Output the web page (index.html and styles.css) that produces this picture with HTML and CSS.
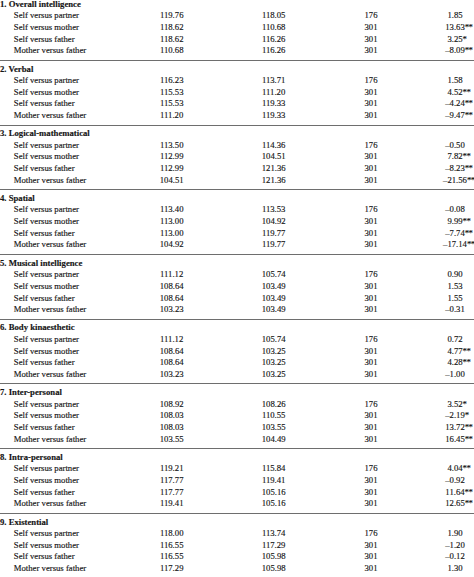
FILE: index.html
```html
<!DOCTYPE html>
<html lang="en">
<head>
<meta charset="utf-8">
<title>Intelligence comparisons</title>
<link rel="stylesheet" href="styles.css">
</head>
<body>
<div class="table">
  <div class="section">
    <div class="head">1. Overall intelligence</div>
    <div class="row"><span class="lab">Self versus partner</span><span class="num">119.76</span><span class="num">118.05</span><span class="num">176</span><span class="num">1.85</span></div>
    <div class="row"><span class="lab">Self versus mother</span><span class="num">118.62</span><span class="num">110.68</span><span class="num">301</span><span class="num">13.63<span class="sig">**</span></span></div>
    <div class="row"><span class="lab">Self versus father</span><span class="num">118.62</span><span class="num">116.26</span><span class="num">301</span><span class="num">3.25<span class="sig">*</span></span></div>
    <div class="row"><span class="lab">Mother versus father</span><span class="num">110.68</span><span class="num">116.26</span><span class="num">301</span><span class="num">–8.09<span class="sig">**</span></span></div>
  </div>
  <div class="section">
    <div class="head">2. Verbal</div>
    <div class="row"><span class="lab">Self versus partner</span><span class="num">116.23</span><span class="num">113.71</span><span class="num">176</span><span class="num">1.58</span></div>
    <div class="row"><span class="lab">Self versus mother</span><span class="num">115.53</span><span class="num">111.20</span><span class="num">301</span><span class="num">4.52<span class="sig">**</span></span></div>
    <div class="row"><span class="lab">Self versus father</span><span class="num">115.53</span><span class="num">119.33</span><span class="num">301</span><span class="num">–4.24<span class="sig">**</span></span></div>
    <div class="row"><span class="lab">Mother versus father</span><span class="num">111.20</span><span class="num">119.33</span><span class="num">301</span><span class="num">–9.47<span class="sig">**</span></span></div>
  </div>
  <div class="section">
    <div class="head">3. Logical-mathematical</div>
    <div class="row"><span class="lab">Self versus partner</span><span class="num">113.50</span><span class="num">114.36</span><span class="num">176</span><span class="num">–0.50</span></div>
    <div class="row"><span class="lab">Self versus mother</span><span class="num">112.99</span><span class="num">104.51</span><span class="num">301</span><span class="num">7.82<span class="sig">**</span></span></div>
    <div class="row"><span class="lab">Self versus father</span><span class="num">112.99</span><span class="num">121.36</span><span class="num">301</span><span class="num">–8.23<span class="sig">**</span></span></div>
    <div class="row"><span class="lab">Mother versus father</span><span class="num">104.51</span><span class="num">121.36</span><span class="num">301</span><span class="num">–21.56<span class="sig">**</span></span></div>
  </div>
  <div class="section">
    <div class="head">4. Spatial</div>
    <div class="row"><span class="lab">Self versus partner</span><span class="num">113.40</span><span class="num">113.53</span><span class="num">176</span><span class="num">–0.08</span></div>
    <div class="row"><span class="lab">Self versus mother</span><span class="num">113.00</span><span class="num">104.92</span><span class="num">301</span><span class="num">9.99<span class="sig">**</span></span></div>
    <div class="row"><span class="lab">Self versus father</span><span class="num">113.00</span><span class="num">119.77</span><span class="num">301</span><span class="num">–7.74<span class="sig">**</span></span></div>
    <div class="row"><span class="lab">Mother versus father</span><span class="num">104.92</span><span class="num">119.77</span><span class="num">301</span><span class="num">–17.14<span class="sig">**</span></span></div>
  </div>
  <div class="section">
    <div class="head">5. Musical intelligence</div>
    <div class="row"><span class="lab">Self versus partner</span><span class="num">111.12</span><span class="num">105.74</span><span class="num">176</span><span class="num">0.90</span></div>
    <div class="row"><span class="lab">Self versus mother</span><span class="num">108.64</span><span class="num">103.49</span><span class="num">301</span><span class="num">1.53</span></div>
    <div class="row"><span class="lab">Self versus father</span><span class="num">108.64</span><span class="num">103.49</span><span class="num">301</span><span class="num">1.55</span></div>
    <div class="row"><span class="lab">Mother versus father</span><span class="num">103.23</span><span class="num">103.49</span><span class="num">301</span><span class="num">–0.31</span></div>
  </div>
  <div class="section">
    <div class="head">6. Body kinaesthetic</div>
    <div class="row"><span class="lab">Self versus partner</span><span class="num">111.12</span><span class="num">105.74</span><span class="num">176</span><span class="num">0.72</span></div>
    <div class="row"><span class="lab">Self versus mother</span><span class="num">108.64</span><span class="num">103.25</span><span class="num">301</span><span class="num">4.77<span class="sig">**</span></span></div>
    <div class="row"><span class="lab">Self versus father</span><span class="num">108.64</span><span class="num">103.25</span><span class="num">301</span><span class="num">4.28<span class="sig">**</span></span></div>
    <div class="row"><span class="lab">Mother versus father</span><span class="num">103.23</span><span class="num">103.25</span><span class="num">301</span><span class="num">–1.00</span></div>
  </div>
  <div class="section">
    <div class="head">7. Inter-personal</div>
    <div class="row"><span class="lab">Self versus partner</span><span class="num">108.92</span><span class="num">108.26</span><span class="num">176</span><span class="num">3.52<span class="sig">*</span></span></div>
    <div class="row"><span class="lab">Self versus mother</span><span class="num">108.03</span><span class="num">110.55</span><span class="num">301</span><span class="num">–2.19<span class="sig">*</span></span></div>
    <div class="row"><span class="lab">Self versus father</span><span class="num">108.03</span><span class="num">103.55</span><span class="num">301</span><span class="num">13.72<span class="sig">**</span></span></div>
    <div class="row"><span class="lab">Mother versus father</span><span class="num">103.55</span><span class="num">104.49</span><span class="num">301</span><span class="num">16.45<span class="sig">**</span></span></div>
  </div>
  <div class="section">
    <div class="head">8. Intra-personal</div>
    <div class="row"><span class="lab">Self versus partner</span><span class="num">119.21</span><span class="num">115.84</span><span class="num">176</span><span class="num">4.04<span class="sig">**</span></span></div>
    <div class="row"><span class="lab">Self versus mother</span><span class="num">117.77</span><span class="num">119.41</span><span class="num">301</span><span class="num">–0.92</span></div>
    <div class="row"><span class="lab">Self versus father</span><span class="num">117.77</span><span class="num">105.16</span><span class="num">301</span><span class="num">11.64<span class="sig">**</span></span></div>
    <div class="row"><span class="lab">Mother versus father</span><span class="num">119.41</span><span class="num">105.16</span><span class="num">301</span><span class="num">12.65<span class="sig">**</span></span></div>
  </div>
  <div class="section">
    <div class="head">9. Existential</div>
    <div class="row"><span class="lab">Self versus partner</span><span class="num">118.00</span><span class="num">113.74</span><span class="num">176</span><span class="num">1.90</span></div>
    <div class="row"><span class="lab">Self versus mother</span><span class="num">116.55</span><span class="num">117.29</span><span class="num">301</span><span class="num">–1.20</span></div>
    <div class="row"><span class="lab">Self versus father</span><span class="num">116.55</span><span class="num">105.98</span><span class="num">301</span><span class="num">–0.12</span></div>
    <div class="row"><span class="lab">Mother versus father</span><span class="num">117.29</span><span class="num">105.98</span><span class="num">301</span><span class="num">1.30</span></div>
  </div>
</div>
</body>
</html>
```

FILE: styles.css
```css
html, body {
  margin: 0;
  padding: 0;
  background: #ffffff;
}

body {
  font-family: "Liberation Serif", "Times New Roman", serif;
  font-size: 8.7px;
  color: #141414;
  -webkit-text-stroke: 0.15px #141414;
  overflow: hidden;
}

.table {
  width: 474px;
  margin-top: -1px;
}

.section {
  padding: 2.8px 0 2.8px 0;
  border-bottom: 1.4px solid #6e6e6e;
}

.section:first-child {
  padding-top: 0;
}

.head {
  font-weight: bold;
  line-height: 11.4px;
  white-space: nowrap;
}

.row {
  display: grid;
  grid-template-columns: 101px 141.4px 62.6px 132px 36px;
  line-height: 11.67px;
  white-space: nowrap;
}

.lab {
  padding-left: 13.8px;
}

.num {
  text-align: center;
}

.sig {
  display: inline-block;
  width: 0;
  overflow: visible;
  text-align: left;
  letter-spacing: -0.5px;
}
```
